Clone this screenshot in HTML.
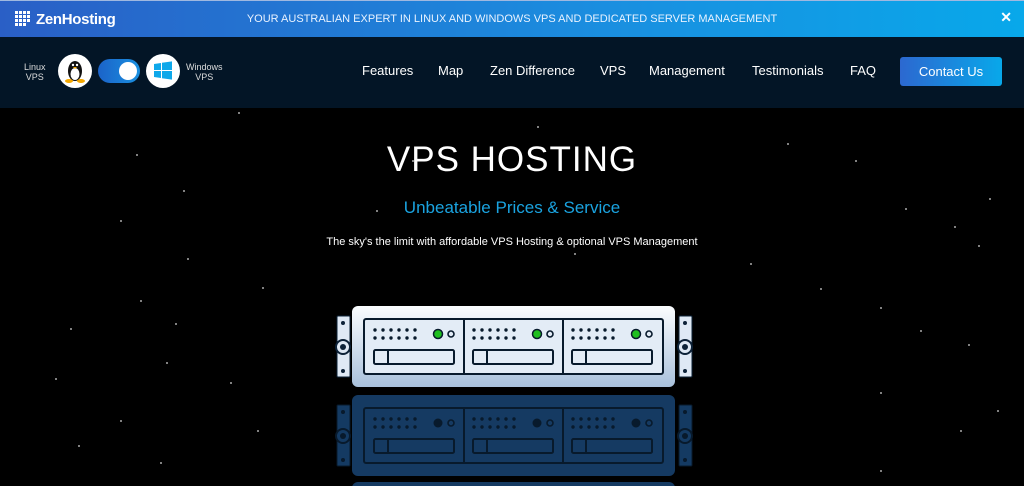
<!DOCTYPE html>
<html><head><meta charset="utf-8"><style>
*{margin:0;padding:0;box-sizing:border-box}
body{width:1024px;height:486px;overflow:hidden;background:#000;font-family:"Liberation Sans",sans-serif;position:relative}
.top{position:absolute;left:0;top:0;width:1024px;height:37px;background:linear-gradient(90deg,#2a5fc6,#1a8fe0 60%,#08a8ea);border-top:1px solid #9fb8e0}
.logo{position:absolute;left:14px;top:9px;color:#fff;font-weight:bold;font-size:15px;display:flex;align-items:center;gap:4px;letter-spacing:-.3px}
.tag{position:absolute;left:0;width:1024px;top:12px;text-align:center;color:#e8f2ff;font-size:11px;letter-spacing:0}
.x{position:absolute;right:12px;top:8px;color:#fff;font-size:14px;font-weight:bold}
.nav{position:absolute;left:0;top:37px;width:1024px;height:71px;background:#031526}
.nav a{position:absolute;top:26px;color:#fff;font-size:13px;text-decoration:none}
.btn{position:absolute;left:900px;top:20px;width:102px;height:29px;border-radius:3px;background:linear-gradient(90deg,#2c68d0,#08a8ea);color:#fff;font-size:13px;text-align:center;line-height:29px}
.sm{position:absolute;color:#ddd;font-size:9px;line-height:10px;text-align:center}
h1{position:absolute;left:0;width:1024px;top:140px;text-align:center;color:#fff;font-size:35px;font-weight:normal;letter-spacing:1px}
.sub{position:absolute;left:0;width:1024px;top:198px;text-align:center;color:#1aa3e0;font-size:17px}
.p{position:absolute;left:0;width:1024px;top:236px;text-align:center;color:#fff;font-size:11px}
.st{position:absolute;width:2px;height:2px;background:#aaa;border-radius:1px}
</style></head><body>
<div class="top">
<div class="logo"><svg width="18" height="18" viewBox="0 0 18 18"><g fill="#fff"><rect x="1" y="1" width="3" height="3"/><rect x="5" y="1" width="3" height="3"/><rect x="9" y="1" width="3" height="3"/><rect x="13" y="1" width="3" height="3"/><rect x="1" y="5" width="3" height="3"/><rect x="5" y="5" width="3" height="3"/><rect x="9" y="5" width="3" height="3"/><rect x="13" y="5" width="3" height="3"/><rect x="1" y="9" width="3" height="3"/><rect x="5" y="9" width="3" height="3"/><rect x="9" y="9" width="3" height="3"/><rect x="13" y="9" width="3" height="3"/><rect x="1" y="13" width="3" height="3"/><rect x="5" y="13" width="3" height="3"/><rect x="9" y="13" width="3" height="3"/></g></svg>ZenHosting</div>
<div class="tag">YOUR AUSTRALIAN EXPERT IN LINUX AND WINDOWS VPS AND DEDICATED SERVER MANAGEMENT</div>
<div class="x">✕</div>
</div>
<div class="nav">
<div class="sm" style="left:24px;top:25px">Linux<br>VPS</div>
<svg style="position:absolute;left:58px;top:17px" width="34" height="34" viewBox="0 0 34 34"><circle cx="17" cy="17" r="17" fill="#fff"/><ellipse cx="17" cy="17" rx="7" ry="10" fill="#111"/><ellipse cx="17" cy="20" rx="4.5" ry="6" fill="#fff"/><circle cx="15" cy="11" r="1.2" fill="#fff"/><circle cx="19" cy="11" r="1.2" fill="#fff"/><path d="M15 13h4l-2 2z" fill="#f5a800"/><ellipse cx="11" cy="27" rx="4" ry="2" fill="#f5a800"/><ellipse cx="23" cy="27" rx="4" ry="2" fill="#f5a800"/></svg>
<div style="position:absolute;left:98px;top:22px;width:42px;height:24px;border-radius:12px;background:linear-gradient(90deg,#1b63c9,#1a90e0)"><div style="position:absolute;right:3px;top:3px;width:18px;height:18px;border-radius:9px;background:#fff"></div></div>
<svg style="position:absolute;left:146px;top:17px" width="34" height="34" viewBox="0 0 34 34"><circle cx="17" cy="17" r="17" fill="#fff"/><path d="M8 10l7-1v7H8zM16 8.8l10-1.4V16H16zM8 17h7v7l-7-1zM16 17h10v8.6l-10-1.4z" fill="#0ea8ea"/></svg>
<div class="sm" style="left:186px;top:25px">Windows<br>VPS</div>
<a style="left:362px">Features</a><a style="left:438px">Map</a><a style="left:490px">Zen Difference</a><a style="left:600px">VPS</a><a style="left:649px">Management</a><a style="left:752px">Testimonials</a><a style="left:850px">FAQ</a>
<div class="btn">Contact Us</div>
</div>
<h1>VPS HOSTING</h1>
<div class="sub">Unbeatable Prices &amp; Service</div>
<div class="p">The sky's the limit with affordable VPS Hosting &amp; optional VPS Management</div>
<div class="st" style="left:238px;top:112px"></div><div class="st" style="left:537px;top:126px"></div><div class="st" style="left:136px;top:154px"></div><div class="st" style="left:787px;top:143px"></div><div class="st" style="left:855px;top:160px"></div><div class="st" style="left:412px;top:160px"></div><div class="st" style="left:183px;top:190px"></div><div class="st" style="left:376px;top:210px"></div><div class="st" style="left:905px;top:208px"></div><div class="st" style="left:989px;top:198px"></div><div class="st" style="left:120px;top:220px"></div><div class="st" style="left:954px;top:226px"></div><div class="st" style="left:187px;top:258px"></div><div class="st" style="left:574px;top:253px"></div><div class="st" style="left:750px;top:263px"></div><div class="st" style="left:978px;top:245px"></div><div class="st" style="left:262px;top:287px"></div><div class="st" style="left:140px;top:300px"></div><div class="st" style="left:820px;top:288px"></div><div class="st" style="left:880px;top:307px"></div><div class="st" style="left:70px;top:328px"></div><div class="st" style="left:175px;top:323px"></div><div class="st" style="left:920px;top:330px"></div><div class="st" style="left:968px;top:344px"></div><div class="st" style="left:166px;top:362px"></div><div class="st" style="left:55px;top:378px"></div><div class="st" style="left:230px;top:382px"></div><div class="st" style="left:880px;top:392px"></div><div class="st" style="left:997px;top:410px"></div><div class="st" style="left:120px;top:420px"></div><div class="st" style="left:257px;top:430px"></div><div class="st" style="left:960px;top:430px"></div><div class="st" style="left:78px;top:445px"></div><div class="st" style="left:160px;top:462px"></div><div class="st" style="left:880px;top:470px"></div>
<svg style="position:absolute;left:330px;top:300px" width="370" height="186" viewBox="0 0 370 186">
<defs>
<linearGradient id="g" x1="0" y1="0" x2="0" y2="1"><stop offset="0" stop-color="#fbfdff"/><stop offset="1" stop-color="#a9c1dc"/></linearGradient>
<g id="bay"><g fill="#081a2c"><circle cx="45" cy="30" r="1.7"/><circle cx="53" cy="30" r="1.7"/><circle cx="61" cy="30" r="1.7"/><circle cx="69" cy="30" r="1.7"/><circle cx="77" cy="30" r="1.7"/><circle cx="85" cy="30" r="1.7"/><circle cx="45" cy="38" r="1.7"/><circle cx="53" cy="38" r="1.7"/><circle cx="61" cy="38" r="1.7"/><circle cx="69" cy="38" r="1.7"/><circle cx="77" cy="38" r="1.7"/><circle cx="85" cy="38" r="1.7"/></g><circle cx="121" cy="34" r="3" fill="none" stroke="#081a2c" stroke-width="1.6"/><rect x="44" y="50" width="80" height="14" rx="1.5" fill="none" stroke="#081a2c" stroke-width="2"/><line x1="58" y1="50" x2="58" y2="64" stroke="#081a2c" stroke-width="2"/></g>
</defs>
<g>
<rect x="7" y="16" width="13" height="61" rx="1" fill="#dfe9f5" stroke="#0d2238"/><circle cx="13" cy="47" r="7" fill="#dfe9f5" stroke="#0d2238" stroke-width="2"/><circle cx="13" cy="47" r="3" fill="#0d2238"/><circle cx="13" cy="23" r="2" fill="#0d2238"/><circle cx="13" cy="71" r="2" fill="#0d2238"/>
<rect x="349" y="16" width="13" height="61" rx="1" fill="#dfe9f5" stroke="#0d2238"/><circle cx="355" cy="47" r="7" fill="#dfe9f5" stroke="#0d2238" stroke-width="2"/><circle cx="355" cy="47" r="3" fill="#0d2238"/><circle cx="355" cy="23" r="2" fill="#0d2238"/><circle cx="355" cy="71" r="2" fill="#0d2238"/>
<rect x="22" y="6" width="323" height="81" rx="6" fill="url(#g)"/>
<rect x="34" y="19" width="299" height="55" rx="2" fill="#e3ecf6" stroke="#081a2c" stroke-width="2"/>
<line x1="134" y1="19" x2="134" y2="74" stroke="#081a2c" stroke-width="2"/><line x1="233" y1="19" x2="233" y2="74" stroke="#081a2c" stroke-width="2"/>
<use href="#bay"/><use href="#bay" x="99"/><use href="#bay" x="198"/>
<g fill="#1fbf1f" stroke="#081a2c" stroke-width="1.5"><circle cx="108" cy="34" r="4.5"/><circle cx="207" cy="34" r="4.5"/><circle cx="306" cy="34" r="4.5"/></g>
</g>
<g transform="translate(0,89)">
<rect x="7" y="16" width="13" height="61" rx="1" fill="#143a62" stroke="#081a2c"/><circle cx="13" cy="47" r="7" fill="#143a62" stroke="#081a2c" stroke-width="2"/><circle cx="13" cy="47" r="3" fill="#081a2c"/><circle cx="13" cy="23" r="2" fill="#081a2c"/><circle cx="13" cy="71" r="2" fill="#081a2c"/>
<rect x="349" y="16" width="13" height="61" rx="1" fill="#143a62" stroke="#081a2c"/><circle cx="355" cy="47" r="7" fill="#143a62" stroke="#081a2c" stroke-width="2"/><circle cx="355" cy="47" r="3" fill="#081a2c"/><circle cx="355" cy="23" r="2" fill="#081a2c"/><circle cx="355" cy="71" r="2" fill="#081a2c"/>
<rect x="22" y="6" width="323" height="81" rx="6" fill="#153a62"/>
<rect x="34" y="19" width="299" height="55" rx="2" fill="#153a62" stroke="#081a2c" stroke-width="2"/>
<line x1="134" y1="19" x2="134" y2="74" stroke="#081a2c" stroke-width="2"/><line x1="233" y1="19" x2="233" y2="74" stroke="#081a2c" stroke-width="2"/>
<use href="#bay"/><use href="#bay" x="99"/><use href="#bay" x="198"/>
<g fill="#081a2c"><circle cx="108" cy="34" r="4.5"/><circle cx="207" cy="34" r="4.5"/><circle cx="306" cy="34" r="4.5"/></g>
</g>
<rect x="22" y="182" width="323" height="20" rx="6" fill="#153a62"/>
</svg>
</body></html>
